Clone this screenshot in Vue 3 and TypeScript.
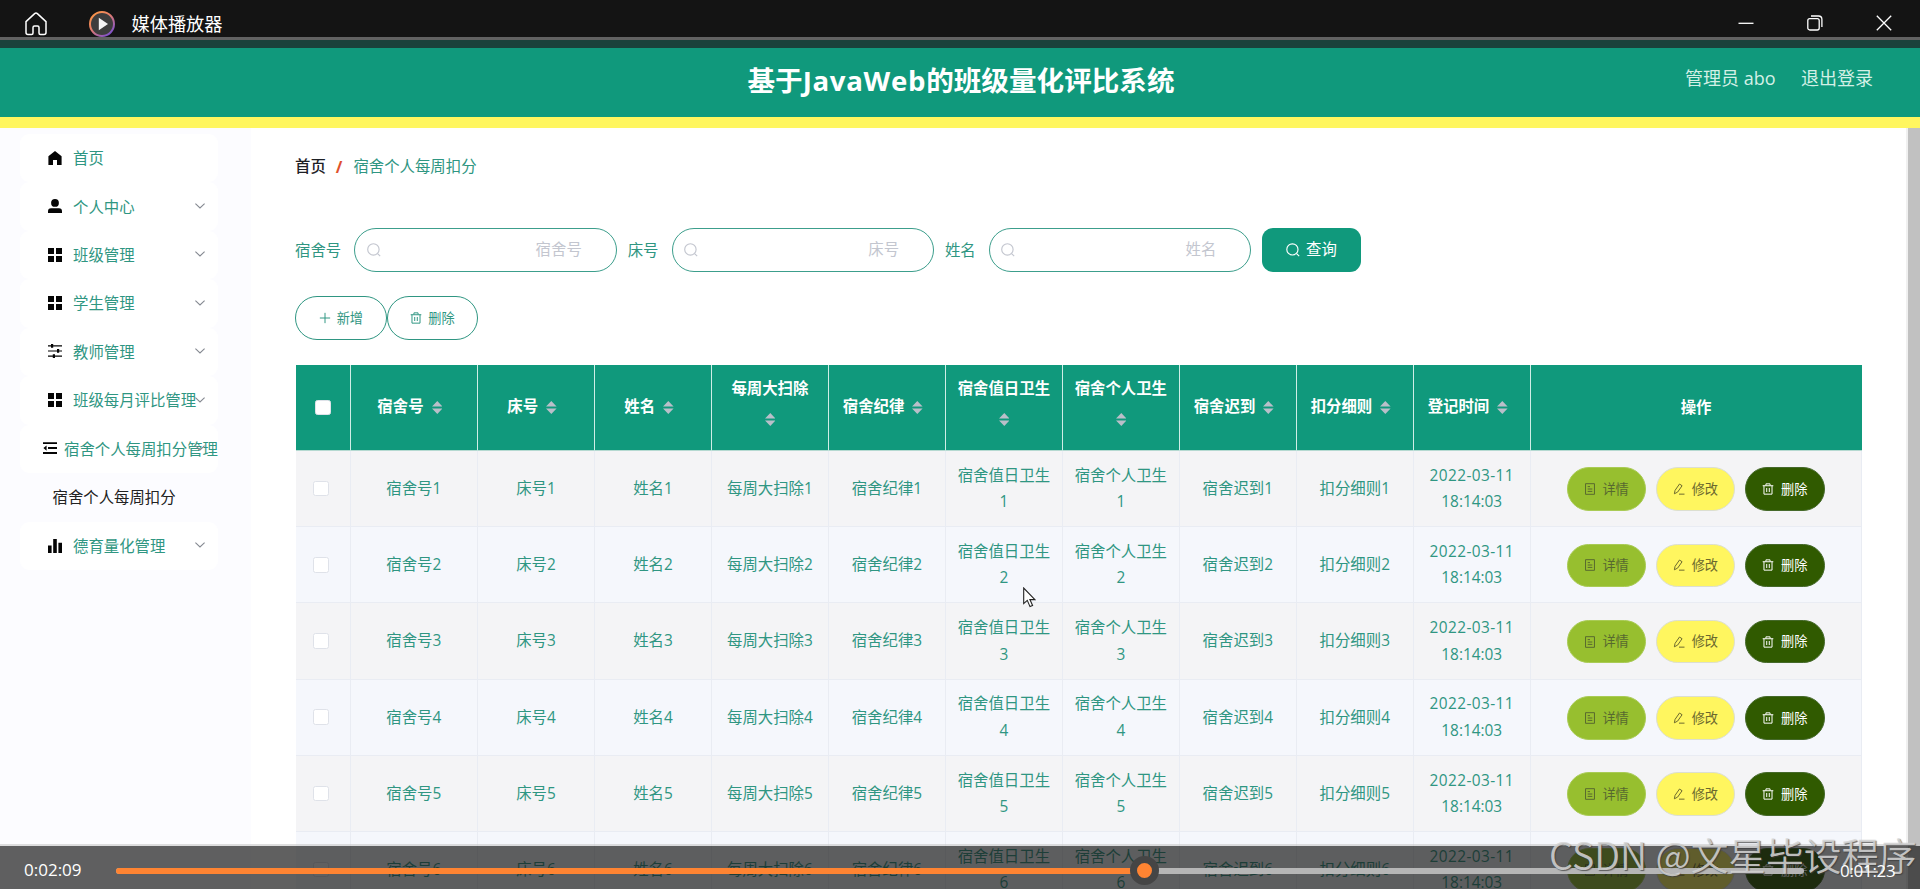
<script setup lang="ts">
interface MenuItem {
  label: string
  icon: 'home' | 'user' | 'grid' | 'sliders' | 'fold' | 'bars'
  arrow: boolean
  wide?: boolean
  child?: string
}

interface Column {
  label: string
  stacked?: boolean
}

const menu: MenuItem[] = [
  { label: '首页', icon: 'home', arrow: false },
  { label: '个人中心', icon: 'user', arrow: true },
  { label: '班级管理', icon: 'grid', arrow: true },
  { label: '学生管理', icon: 'grid', arrow: true },
  { label: '教师管理', icon: 'sliders', arrow: true },
  { label: '班级每月评比管理', icon: 'grid', arrow: true },
  { label: '宿舍个人每周扣分管理', icon: 'fold', arrow: true, wide: true, child: '宿舍个人每周扣分' },
  { label: '德育量化管理', icon: 'bars', arrow: true },
]

const filters: string[] = ['宿舍号', '床号', '姓名']

const columns: Column[] = [
  { label: '宿舍号' },
  { label: '床号' },
  { label: '姓名' },
  { label: '每周大扫除', stacked: true },
  { label: '宿舍纪律' },
  { label: '宿舍值日卫生', stacked: true },
  { label: '宿舍个人卫生', stacked: true },
  { label: '宿舍迟到' },
  { label: '扣分细则' },
]

const rows: number[] = [1, 2, 3, 4, 5, 6]
</script>

<template>
  <div class="screen">
    <div class="page">
      <header class="header">
        <h1 class="title">基于<span class="latin">JavaWeb</span>的班级量化评比系统</h1>
        <nav class="account">
          <span>管理员 abo</span>
          <span>退出登录</span>
        </nav>
      </header>

      <div class="body">
        <aside class="sidebar">
          <template v-for="item in menu" :key="item.label">
            <div class="menu-item" :class="{ wide: item.wide }">
              <svg class="menu-icon" viewBox="0 0 14 14">
                <path v-if="item.icon === 'home'" d="M7 0 L13.6 5.2 V14 H9 V9 H5 V14 H.4 V5.2 Z" />
                <template v-else-if="item.icon === 'user'">
                  <circle cx="7" cy="3.9" r="3.9" />
                  <path d="M0 14 V12.4 Q0 9.3 3 9.3 H11 Q14 9.3 14 12.4 V14 Z" />
                </template>
                <path v-else-if="item.icon === 'grid'" d="M0 0h6v6H0zM8 0h6v6H8zM0 8h6v6H0zM8 8h6v6H8z" />
                <path
                  v-else-if="item.icon === 'sliders'"
                  d="M0 1.3h14v1.1H0zM3 0h2.2v3.8H3zM0 6.4h14v1.1H0zM9 5h2.2v3.8H9zM0 11.6h14v1.1H0zM4.8 10.2h2.2v3.8H4.8z"
                />
                <path
                  v-else-if="item.icon === 'fold'"
                  d="M0 1.2h14v1.9H0zM5 6.1h9v1.9H5zM0 11h14v1.9H0zM.4 7.1l3.2-2.6v5.2z"
                />
                <path v-else d="M0 6.5h3.6V14H0zM5.2 0h3.6v14H5.2zM10.4 3.8H14V14h-3.6z" />
              </svg>
              <span class="menu-label">{{ item.label }}</span>
              <svg v-if="item.arrow" class="menu-arrow" viewBox="0 0 10 6">
                <path d="M.4 .6 L5 5 L9.6 .6" />
              </svg>
            </div>
            <div v-if="item.child" class="submenu">{{ item.child }}</div>
          </template>
        </aside>

        <main class="content">
          <div class="crumbs">
            <span class="crumb-home">首页</span>
            <span class="crumb-sep">/</span>
            <span class="crumb-here">宿舍个人每周扣分</span>
          </div>

          <div class="filters">
            <template v-for="name in filters" :key="name">
              <span class="filter-label">{{ name }}</span>
              <div class="field">
                <svg class="ico lens" viewBox="0 0 14 14">
                  <circle cx="6.4" cy="6.4" r="5.7" />
                  <path d="M10.6 10.6 L13.2 13.2" />
                </svg>
                <span class="hint">{{ name }}</span>
              </div>
            </template>
            <button class="query">
              <svg class="ico" viewBox="0 0 14 14">
                <circle cx="6.4" cy="6.4" r="5.6" />
                <path d="M10.6 10.6 L13.2 13.2" />
              </svg>
              查询
            </button>
          </div>

          <div class="tools">
            <button class="tool">
              <svg class="ico" viewBox="0 0 14 14"><path d="M7 1 V13 M1 7 H13" /></svg>
              新增
            </button>
            <button class="tool">
              <svg class="ico" viewBox="0 0 14 14">
                <path d="M.8 3.2 H13.2 M4.6 3 V1 H9.4 V3 M2.3 3.2 V13 H11.7 V3.2 M5.5 5.8 V10.5 M8.5 5.8 V10.5" />
              </svg>
              删除
            </button>
          </div>

          <div class="table">
            <div class="row head">
              <div class="cell"><i class="check"></i></div>
              <div v-for="col in columns" :key="col.label" class="cell" :class="{ stacked: col.stacked }">
                <span>{{ col.label }}</span>
                <svg class="sort" viewBox="0 0 10.6 13"><path d="M0 5.6 L5.3 0 L10.6 5.6zM0 7.4 H10.6 L5.3 13z" /></svg>
              </div>
              <div class="cell">
                <span>登记时间</span>
                <svg class="sort" viewBox="0 0 10.6 13"><path d="M0 5.6 L5.3 0 L10.6 5.6zM0 7.4 H10.6 L5.3 13z" /></svg>
              </div>
              <div class="cell ops">操作</div>
            </div>

            <div v-for="n in rows" :key="n" class="row" :class="{ even: n % 2 === 0 }">
              <div class="cell pick"><i class="check"></i></div>
              <div v-for="col in columns" :key="col.label" class="cell">{{ col.label }}{{ n }}</div>
              <div class="cell when"><span class="date">2022-03-11</span><span>18:14:03</span></div>
              <div class="cell actions">
                <button class="act detail">
                  <svg class="ico" viewBox="0 0 14 14">
                    <path d="M1.8 .8 H12.2 V13.2 H1.8 Z M4.3 4.2 H7 M4.3 7 H9.7 M4.3 9.8 H9.7" />
                  </svg>
                  详情
                </button>
                <button class="act edit">
                  <svg class="ico" viewBox="0 0 14 14">
                    <path d="M1.6 12.6 L2.4 8.6 L7.6 1.2 L10.6 3.2 L5.4 10.6 Z M7 13 H13.4" />
                  </svg>
                  修改
                </button>
                <button class="act remove">
                  <svg class="ico" viewBox="0 0 14 14">
                    <path d="M.8 3.2 H13.2 M4.6 3 V1 H9.4 V3 M2.3 3.2 V13 H11.7 V3.2 M5.5 5.8 V10.5 M8.5 5.8 V10.5" />
                  </svg>
                  删除
                </button>
              </div>
            </div>
          </div>
        </main>

        <div class="scrollbar"></div>
      </div>
    </div>

    <div class="player-top">
      <svg class="home" viewBox="0 0 22 24">
        <path d="M1 9.6 L9.6 1.6 Q11 .5 12.4 1.6 L21 9.6 V20.5 Q21 22.5 19 22.5 H15.4 Q14 22.5 14 21 V15.5 Q14 14 12.5 14 H9.5 Q8 14 8 15.5 V21 Q8 22.5 6.6 22.5 H3 Q1 22.5 1 20.5 Z" />
      </svg>
      <svg class="logo" viewBox="0 0 26 26">
        <defs>
          <linearGradient id="ring" x1="0" y1="0" x2=".8" y2="1">
            <stop offset="0" stop-color="#ff9a3c" />
            <stop offset=".45" stop-color="#e8806a" />
            <stop offset="1" stop-color="#7a4fd0" />
          </linearGradient>
        </defs>
        <circle cx="13" cy="13" r="12" fill="#3d3d3d" stroke="url(#ring)" stroke-width="2" />
        <path d="M9.8 6.8 L19 13 L9.8 19.2 Z" fill="#f4f4f4" />
      </svg>
      <span class="app-name">媒体播放器</span>
      <div class="window-buttons">
        <svg viewBox="0 0 16 16"><path d="M.5 8.3 H15.5" /></svg>
        <svg viewBox="0 0 16 16">
          <rect x=".8" y="3.6" width="11.4" height="11.4" rx="2" />
          <path d="M4 1 H11.5 Q14.9 1 14.9 4.4 V12" />
        </svg>
        <svg viewBox="0 0 16 16"><path d="M.8 .8 L15.2 15.2 M15.2 .8 L.8 15.2" /></svg>
      </div>
    </div>
    <div class="player-edge"></div>

    <svg class="pointer" viewBox="0 0 13 21">
      <path d="M.7 1 V16.6 L4.3 13.4 L7 19.6 L9.6 18.4 L6.9 12.6 H11.9 Z" />
    </svg>

    <div class="player-bottom">
      <span class="time">0:02:09</span>
      <div class="track"><div class="played"></div><div class="knob"></div></div>
    </div>
    <div class="watermark">CSDN @文星毕设程序</div>
    <span class="time remaining">0:01:23</span>
  </div>
</template>

<style>
body {
  margin: 0;
  overflow: hidden;
}
</style>

<style scoped>
.screen {
  position: relative;
  width: 1920px;
  height: 889px;
  overflow: hidden;
  background: #fff;
  color: #2f9682;
  font: 15.4px/26.3px 'Open Sans', 'Noto Sans CJK SC', sans-serif;
}

.screen * {
  box-sizing: border-box;
}

.page {
  padding-top: 48px;
}

.header {
  display: grid;
  grid-template-columns: 1fr auto 1fr;
  align-items: center;
  height: 80px;
  padding: 0 47px 0 49px;
  background: #10997c;
  border-bottom: 11px solid #fff65f;
}

.title {
  grid-column: 2;
  margin: -6px 0 0;
  color: #fff;
  font-size: 27.6px;
  line-height: 40px;
  font-weight: 700;
  white-space: nowrap;
}

.latin {
  letter-spacing: .7px;
}

.account {
  display: flex;
  justify-content: flex-end;
  gap: 25.5px;
  margin-top: -9px;
  color: #d3f0e6;
  font-size: 18px;
}

.body {
  display: flex;
  height: 761px;
}

.sidebar {
  flex: none;
  width: 251px;
  padding: 6px 33px 0 19.5px;
  background: #fcfcff;
}

.menu-item {
  display: flex;
  align-items: center;
  position: relative;
  height: 48.45px;
  padding-left: 28px;
  background: #fff;
  border-radius: 9px;
  white-space: nowrap;
}

.menu-item.wide {
  padding-left: 23.5px;
}

.menu-label {
  padding-top: 2px;
}

.menu-icon {
  flex: none;
  width: 14px;
  height: 14px;
  margin: -1px 11.5px 0 0;
  fill: #050505;
}

.wide .menu-icon {
  margin-right: 7px;
}

.menu-arrow {
  position: absolute;
  right: 13px;
  top: 20.5px;
  width: 10px;
  height: 6px;
  fill: none;
  stroke: #858991;
  stroke-width: 1.1;
}

.submenu {
  height: 48.8px;
  padding-left: 33px;
  color: #222;
  line-height: 50.5px;
  white-space: nowrap;
}

.content {
  flex: 1;
  padding: 26px 0 0 44px;
  background: #fff;
}

.crumbs {
  display: flex;
  align-items: center;
  height: 27px;
}

.crumb-home {
  color: #1e2026;
  font-weight: 500;
}

.crumb-sep {
  margin: 0 11px 0 10px;
  color: #e0522d;
  font-size: 16px;
  font-weight: 700;
}

.filters {
  display: flex;
  align-items: center;
  height: 44.4px;
  margin-top: 46.5px;
}

.filter-label {
  flex: none;
  margin-right: 13.1px;
  padding-top: 2px;
}

.field {
  display: flex;
  align-items: center;
  justify-content: space-between;
  width: 262.5px;
  height: 44.4px;
  margin-right: 10.9px;
  padding: 0 34px 0 11.5px;
  border: 1px solid #3c9e8c;
  border-radius: 22px;
  color: #c3c6cf;
}

.hint {
  padding-top: 1px;
}

.ico {
  flex: none;
  width: 12px;
  height: 12px;
  fill: none;
  stroke: currentColor;
  stroke-width: 1.15;
}

.ico.lens {
  width: 14px;
  height: 14px;
}

button {
  display: flex;
  align-items: center;
  justify-content: center;
  padding: 0;
  border: 0;
  font: inherit;
}

.query {
  gap: 6px;
  width: 98.5px;
  height: 44.4px;
  border-radius: 11px;
  background: #10997c;
  color: #fff;
}

.query .ico {
  width: 14px;
  height: 14px;
}

.tools {
  display: flex;
  margin-top: 24px;
}

.tool {
  gap: 6px;
  width: 91.7px;
  height: 44px;
  border: 1px solid #2f9682;
  border-radius: 22px;
  background: #fff;
  color: #2f9682;
  font-size: 13.2px;
}

.table {
  width: 1565.5px;
  margin: 25.1px 0 0 1px;
}

.row {
  display: grid;
  grid-template-columns: 54.5px 127.5px repeat(9, 116.98px) 1fr;
  height: 76.2px;
  background: #f4f4f6;
}

.row.even {
  background: #f5f7fc;
}

.cell {
  display: flex;
  align-items: center;
  justify-content: center;
  padding: 1px 11px 0;
  border-right: 1px solid #e9ecf3;
  border-bottom: 1px solid #e9ecf3;
  text-align: center;
  word-break: break-word;
}

.row.head {
  height: 86.1px;
  background: #10997c;
  color: #fff;
  font-weight: 700;
}

.head .cell {
  padding: 0 5px;
  border-right-color: #cfeee6;
  border-bottom-color: #b5d9d1;
  white-space: nowrap;
}

.head .cell:last-child {
  border-right: 0;
}

.head .ops {
  padding-top: 1px;
}

.head .stacked {
  flex-direction: column;
  gap: 10.5px;
  padding-bottom: 13px;
}

.sort {
  flex: none;
  width: 10.6px;
  height: 13px;
  margin: 0 8px;
  fill: #b9bfc9;
}

.check {
  width: 15.6px;
  height: 15.6px;
  border: 1px solid #dfe2e9;
  border-radius: 2.5px;
  background: #fff;
}

.pick {
  padding: 0 14.5px 0 11px;
}

.when {
  flex-direction: column;
}

.date {
  letter-spacing: .4px;
}

.actions {
  gap: 9.8px;
}

.act {
  gap: 6.5px;
  width: 79.5px;
  height: 43.6px;
  border: 1px solid #dcdfd0;
  border-radius: 22px;
  font-size: 13.2px;
}

.detail {
  background: #97bf2f;
  border-color: #a9cb55;
  color: #57692f;
}

.edit {
  background: #fff65f;
  color: #6b682e;
}

.remove {
  background: #305a00;
  border-color: #45692a;
  color: #fff;
}

.scrollbar {
  flex: none;
  width: 14px;
  border-left: 2px solid #f0f0f0;
  background: #c1c1c1;
}

.player-top {
  position: absolute;
  inset: 0 0 auto;
  display: flex;
  align-items: center;
  height: 37px;
  padding: 11px 14px 0 25px;
  background: #141414;
}

.home {
  width: 22px;
  height: 24px;
  fill: none;
  stroke: #fff;
  stroke-width: 1.5;
}

.logo {
  width: 26px;
  height: 26px;
  margin: 0 16.5px 0 42px;
}

.app-name {
  padding-top: 1px;
  color: #fff;
  font-size: 18.2px;
}

.window-buttons {
  display: flex;
  gap: 53px;
  margin: -2px 14px 0 auto;
}

.window-buttons svg {
  width: 16px;
  height: 16px;
  fill: none;
  stroke: #fff;
  stroke-width: 1.3;
}

.player-edge {
  position: absolute;
  inset: 37px 0 auto;
  height: 11px;
  border-top: 3px solid #626262;
  background: #1a423b;
}

.pointer {
  position: absolute;
  left: 1023px;
  top: 587px;
  width: 13px;
  height: 21px;
  fill: #fff;
  stroke: #222;
  stroke-width: 1.1;
}

.player-bottom {
  position: absolute;
  inset: auto 0 0;
  display: flex;
  align-items: center;
  height: 45px;
  padding: 6px 116px 0 24px;
  border-top: 2px solid rgba(200, 200, 200, .6);
  background: rgba(20, 20, 20, .68);
  background-clip: padding-box;
}

.time {
  flex: none;
  width: 92px;
  color: #fff;
  font-size: 17px;
}

.track {
  display: flex;
  align-items: center;
  flex: 1;
  height: 6px;
  border-radius: 3px;
  background: #b6b6b6;
}

.played {
  width: 1016px;
  height: 6px;
  border-radius: 3px 0 0 3px;
  background: #ff8432;
}

.knob {
  width: 29px;
  height: 29px;
  margin-left: -2px;
  border: 7px solid #454545;
  border-radius: 50%;
  background: #ff8432;
}

.watermark {
  position: absolute;
  left: 1549px;
  top: 827px;
  color: rgba(215, 215, 215, .85);
  font: 350 37.7px/54px 'Noto Sans CJK SC', sans-serif;
  text-shadow: 1px 1px 1px rgba(60, 60, 60, .75);
  white-space: nowrap;
}

.remaining {
  position: absolute;
  left: 1840px;
  bottom: 5px;
  width: auto;
  letter-spacing: -.3px;
}
</style>
